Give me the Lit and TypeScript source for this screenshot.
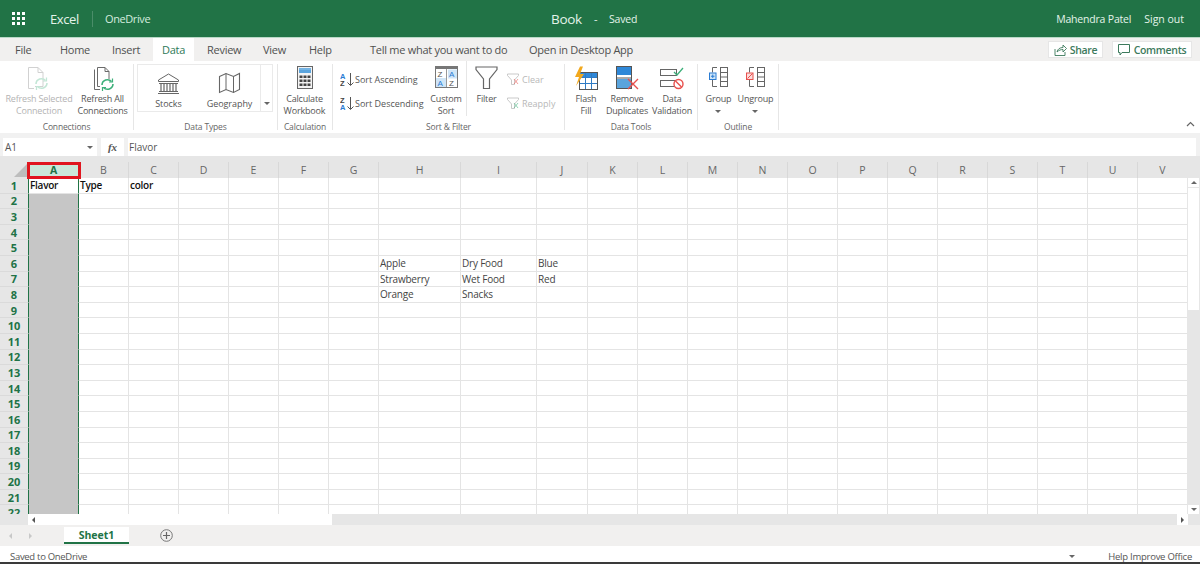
import { LitElement, html, css, svg } from "lit";
import { customElement } from "lit/decorators.js";

const COLS: [string, number][] = [
  ["A", 50], ["B", 50], ["C", 50], ["D", 50], ["E", 50], ["F", 50], ["G", 50], ["H", 82], ["I", 76], ["J", 51], ["K", 50],
  ["L", 50], ["M", 50], ["N", 50], ["O", 50], ["P", 50], ["Q", 50], ["R", 50], ["S", 50], ["T", 50], ["U", 50], ["V", 50],
];
const CELLS: Record<string, string> = {
  A1: "Flavor", B1: "Type", C1: "color",
  H6: "Apple", I6: "Dry Food", J6: "Blue",
  H7: "Strawberry", I7: "Wet Food", J7: "Red",
  H8: "Orange", I8: "Snacks",
};
/* label, slot width, left inset of the label inside its slot */
const TABS: [string, number, number][] = [
  ["File", 60, 15], ["Home", 52, 0], ["Insert", 41, 0], ["Data", 41, 9], ["Review", 69, 13],
  ["View", 46, 0], ["Help", 61, 0], ["Tell me what you want to do", 159, 0], ["Open in Desktop App", 140, 0],
];

const icon = (w: number, h: number, body: unknown) => html`<svg width=${w} height=${h} viewBox="0 0 ${w} ${h}" fill="none">${body}</svg>`;

const refresh = (o: number) => svg`<g opacity=${o}><path d="M1.500 1.500H11L16 6.500V20.500H8M1.500 1.500V22.500H7" stroke="#6a6a6a"/><path d="M11 1.500V6.500H16" stroke="#6a6a6a"/><path d="M9 18a5.500 5.500 0 0 1 9.500-3.500M20 17a5.500 5.500 0 0 1-9.500 3.500" stroke="#3db07a" stroke-width="1.600"/><path d="M19.500 11.500V15H16M9.500 24V20.500H13" stroke="#3db07a" stroke-width="1.200"/></g>`;
const refreshAll = svg`<path d="M3.500 3.500V23.500H9" stroke="#6a6a6a"/><path d="M6.500 1.500H14L18 5.500V13M6.500 1.500V20.500H9" stroke="#6a6a6a"/><path d="M14 1.500V5.500H18" stroke="#6a6a6a"/><path d="M11 19a5.500 5.500 0 0 1 9.500-3.500M22 18a5.500 5.500 0 0 1-9.500 3.500" stroke="#3db07a" stroke-width="1.600"/><path d="M21.500 12.500V16H18M11.500 25V21.500H15" stroke="#3db07a" stroke-width="1.200"/>`;
const bank = svg`<path d="M1.500 8 11.500 2l10 6v1.500h-20z" stroke="#666"/><path d="M4 12v7M7 12v7M10 12v7M13 12v7M16 12v7M19 12v7" stroke="#666" stroke-width="1.200"/><path d="M2 11.500h19M2 19.500h19M1 21.500h21" stroke="#666"/>`;
const mapI = svg`<path d="M1.500 4.500 8 1.500l7.500 3 6-3v16l-6 3-7.500-3-6.500 3z" stroke="#666" stroke-width="1.100"/><path d="M8 1.500v16M15.500 4.500v16" stroke="#666"/>`;
const calc = svg`<rect x=".5" y=".5" width="15" height="22" fill="#f4f4f4" stroke="#666"/><rect x="2" y="2" width="12" height="5" fill="#5aa4dd"/><path d="M2 3h12" stroke="#8fc3ea"/>${[9.5, 13.5, 17.5].map((y) => [2.5, 6.5, 10.5].map((x) => svg`<rect x=${x} y=${y} width="3" height="2.500" fill="#444"/>`))}`;
const az = (top: string, bot: string) => svg`<text x="0" y="7" font-size="7.500" font-weight="700" font-family="Liberation Sans" fill=${top}>${top === "#2b7cd3" ? "A" : "Z"}</text><text x="0" y="14" font-size="7.500" font-weight="700" font-family="Liberation Sans" fill=${bot}>${bot === "#2b7cd3" ? "A" : "Z"}</text><path d="M10.500 1v12M7.500 10.500l3 3 3-3" stroke="#555"/>`;
const customSort = svg`<rect x="0.500" y="0.500" width="22" height="21" fill="#fff" stroke="#777"/><path d="M0 1.500h23" stroke="#777" stroke-width="3"/><path d="M11.500 3v18" stroke="#999"/><rect x="13" y="3.500" width="9" height="9" fill="#cfe5f7"/><rect x="1" y="12" width="10" height="9" fill="#cfe5f7"/><text x="2.500" y="10.500" font-size="8" font-family="Liberation Sans" fill="#555">Z</text><text x="2.500" y="19.500" font-size="8" font-family="Liberation Sans" fill="#2b7cd3">A</text><text x="14" y="10.500" font-size="8" font-family="Liberation Sans" fill="#2b7cd3">A</text><text x="14" y="19.500" font-size="8" font-family="Liberation Sans" fill="#555">Z</text>`;
const funnel = svg`<path d="M1 1h21v2.500L14.500 13v9.500h-6V13L1 3.500z" stroke="#666" stroke-width="1.200"/>`;
const smallFunnel = (c: string) => svg`<path d="M.5 1h11v1.500L7.500 7v4.500h-3V7L.5 2.500z" stroke="#bbb" stroke-opacity=".8"/><path d="M7 6l4 5M11 6l-4 5" stroke=${c} stroke-opacity=".55"/>`;
const flash = svg`<rect x="5.500" y="6.500" width="18" height="17" fill="#fff" stroke="#555"/><rect x="6" y="7" width="17" height="4.500" fill="#2f88d8"/><path d="M6 11.500h17M6 17.500h17M11.500 7v16M17.500 7v16" stroke="#2f7bc4"/><path d="M6 .5 1 11h4l-3 9 8-12H6l3-7.500z" fill="#f2a81d"/>`;
const removeDup = svg`<rect x=".5" y=".5" width="15" height="22" fill="#fff" stroke="#555"/><rect x="1" y="1" width="14" height="8" fill="#2f88d8"/><rect x="1" y="13" width="14" height="9" fill="#5aa4dd"/><path d="M1 12h14" stroke="#555"/><path d="M12 13l10 10M22 13 12 23" stroke="#e8504d" stroke-width="1.400"/>`;
const validate = svg`<rect x=".5" y="3.500" width="16" height="6" stroke="#666"/><rect x=".5" y="14.500" width="16" height="6" stroke="#666"/><path d="M14 6l3 3 6-7" stroke="#3db07a" stroke-width="1.300"/><circle cx="18.500" cy="18" r="4.500" fill="#fff" stroke="#e8504d" stroke-width="1.400"/><path d="M15.500 15l6 6" stroke="#e8504d" stroke-width="1.400"/>`;
const stack = svg`<rect x="12.500" y="1.500" width="7" height="19" stroke="#666"/><path d="M12.500 6.500h7M12.500 11h7M12.500 15.500h7" stroke="#666"/>`;
const group = svg`${stack}<path d="M9 1.500H4.500v5M4.500 14v6.500H9" stroke="#666"/><rect x="1.500" y="7" width="6.500" height="6.500" fill="#cfe5f7" stroke="#2b7cd3"/><path d="M3 10.250h3.500M4.750 8.500V12" stroke="#2b7cd3"/>`;
const ungroup = svg`${stack}<path d="M9 1.500H4.500v5M4.500 14v6.500H9" stroke="#666"/><rect x="1.500" y="7" width="6.500" height="6.500" fill="#fbdcdc" stroke="#e8504d"/><path d="M2.500 12.500l5-5" stroke="#e8504d"/>`;

@customElement("app-root")
export class AppRoot extends LitElement {
  static styles = css`
    :host { display: block; width: 1200px; height: 564px; overflow: hidden; background: #f1f0ef; font-family: "Open Sans", "Noto Sans", sans-serif; color: #444; position: relative; }
    * { box-sizing: border-box; }
    svg { display: block; }
    .head { height: 38px; background: #217346; border-bottom: 1px solid #b9d9c7; display: flex; align-items: center; color: #e4f3ea; }
    .waffle { margin-left: 12px; width: 13px; height: 13px; display: grid; grid-template: repeat(3, 3px) / repeat(3, 3px); gap: 2px; }
    .waffle i { background: #fff; }
    .excel { margin-left: 25px; font-size: 13px; letter-spacing: -0.4px; width: 42px; }
    .vsep { width: 1px; height: 16px; background: #4a8d69; }
    .onedrive { margin-left: 12px; font-size: 11px; letter-spacing: -0.4px; width: 446px; color: #d4ecdf; }
    .book { font-size: 13.500px; letter-spacing: -0.3px; width: 43px; }
    .dash { font-size: 11px; width: 15px; }
    .saved { font-size: 10.500px; letter-spacing: -0.2px; }
    .user { margin-left: auto; font-size: 10.500px; letter-spacing: -0.2px; white-space: nowrap; }
    .signout { margin: 0 16px 0 13px; font-size: 10.500px; white-space: nowrap; }
    .tabs { height: 23px; display: flex; align-items: stretch; font-size: 11px; letter-spacing: -0.27px; position: relative; }
    .tab { display: flex; align-items: center; white-space: nowrap; color: #505050; flex: none; }
    .tab.active { background: #fff; color: #2f7a58; }
    .tabs .spacer { margin-left: auto; display: flex; gap: 9px; padding: 3px 8px 3px 0; }
    .pill { background: #fff; border: 1px solid #e6e6e6; display: flex; align-items: center; justify-content: center; gap: 3px; font-size: 10.500px; letter-spacing: -0.3px; color: #3c7a5c; height: 17px; font-weight: 600; }
    .pill.share { width: 55px; }
    .pill.comments { width: 80px; }
    .ribbon { height: 72px; background: #fff; display: flex; position: relative; }
    .group { display: flex; flex-direction: column; border-right: 1px solid #e6e6e6; margin: 3px 0 3px; flex: none; }
    .body { height: 55px; margin-top: -3px; display: flex; flex: none; }
    .body.conn { padding-left: 4px; }
    .body.outline { padding-left: 2px; }
    .glabel { text-align: center; font-size: 8.500px; letter-spacing: -0.15px; color: #666; margin-top: 5px; line-height: 12px; white-space: nowrap; }
    .btn { display: flex; flex-direction: column; align-items: center; font-size: 9px; letter-spacing: -0.18px; line-height: 11.500px; text-align: center; color: #555; flex: none; white-space: nowrap; }
    .btn .ic { height: 32px; display: flex; align-items: flex-start; justify-content: center; padding-top: 5px; flex: none; }
    .btn.off { color: #b4b4b4; }
    .dtbox { margin: 3px 3px 0 3px; width: 136px; height: 48px; border: 1px solid #eaeaea; display: flex; position: relative; }
    .dtbtn { display: flex; flex-direction: column; align-items: center; font-size: 9px; letter-spacing: -0.05px; color: #555; padding-top: 7px; gap: 3px; flex: none; width: 61px; }
    .dtmore { margin-left: auto; width: 12px; border-left: 1px solid #eaeaea; display: flex; align-items: flex-end; justify-content: center; padding-bottom: 6px; }
    .caret { width: 0; height: 0; border: 3px solid transparent; border-top: 3px solid #666; border-bottom: 0; }
    .incaret { display: inline-block; vertical-align: middle; }
    .sortcol { width: 93px; padding-left: 7px; display: flex; flex-direction: column; gap: 10px; padding-top: 11px; flex: none; }
    .sortrow { display: flex; align-items: center; gap: 0; font-size: 9px; color: #555; height: 14px; white-space: nowrap; }
    .clearcol { padding-left: 1px; display: flex; flex-direction: column; gap: 10px; padding-top: 11px; }
    .clearrow { display: flex; align-items: center; gap: 3px; font-size: 9px; color: #b8b8b8; height: 14px; }
    .innersep { width: 1px; height: 55px; background: #e6e6e6; flex: none; }
    .chev { position: absolute; right: 5px; bottom: 6px; }
    .gap { height: 5px; background: #f1f1f1; }
    .fbar { height: 18px; display: flex; gap: 4px; padding-left: 3px; padding-right: 4px; background: #f1f1f1; }
    .namebox { width: 94px; background: #fff; font-size: 10px; color: #555; display: flex; align-items: center; padding-left: 2px; justify-content: space-between; padding-right: 4px; }
    .fx { width: 23px; background: #fff; font-family: "Liberation Serif", serif; font-style: italic; font-size: 11px; display: flex; align-items: center; justify-content: center; color: #555; font-weight: 700; }
    .fval { flex: 1; background: #fff; font-size: 10px; color: #555; display: flex; align-items: center; padding-left: 1px; }
    .sheet { height: 369px; background: #e6e6e6; padding-top: 6px; position: relative; display: flex; flex-direction: column; }
    .gridwrap { height: 352px; display: flex; flex: none; }
    .gridclip { width: 1187px; height: 352px; overflow: hidden; flex: none; }
    .grid { display: grid; grid-template-rows: 16px repeat(22, 15.600px); background: #fff; }
    .c { border-right: 1px solid #e4e4e4; border-bottom: 1px solid #e4e4e4; font-size: 10px; letter-spacing: -0.2px; padding-left: 1px; line-height: 14px; color: #444; white-space: nowrap; overflow: hidden; background: #fff; }
    .c.b { font-weight: 600; color: #111; letter-spacing: -0.25px; }
    .c.sel { background: #c6c6c6; border-bottom-color: #c6c6c6; }
    .c.selA { border-right: 1px solid #217346; }
    .c.sel1 { background: #fff; border-bottom-color: #e4e4e4; }
    .ch { background: #e6e6e6; border-right: 1px solid #d8d8d8; font-size: 10.500px; color: #666; display: flex; align-items: center; justify-content: center; }
    .ch.sel { background: #cbe8da; color: #217346; font-weight: 700; }
    .ch.corner { border: 0; display: flex; justify-content: flex-end; align-items: flex-end; padding: 0 2px 1px 0; }
    .rh { background: #e6e6e6; font-size: 11px; font-weight: 700; color: #217346; display: flex; align-items: center; justify-content: center; border-bottom: 1px solid #dadada; border-right: 1px solid #217346; line-height: 1; overflow: hidden; }
    .vbar { width: 13px; height: 352px; padding-top: 16px; display: flex; flex-direction: column; background: #e6e6e6; }
    .vbtn { height: 9px; margin: 0 1px; background: #fff; display: flex; align-items: center; justify-content: center; flex: none; }
    .vthumb { height: 122px; margin: 1px 1px 0; background: #fff; flex: none; }
    .vfill { flex: 1; }
    .up { border: 3px solid transparent; border-bottom: 3px solid #666; border-top: 0; width: 0; height: 0; }
    .down { border: 3px solid transparent; border-top: 3px solid #666; border-bottom: 0; width: 0; height: 0; }
    .hbar { flex: 1; display: flex; background: #e6e6e6; padding: 0 12px 0 28px; }
    .hbtn { width: 11px; background: #fff; display: flex; align-items: center; justify-content: center; flex: none; }
    .hthumb { width: 293px; background: #fff; flex: none; }
    .left { border: 3px solid transparent; border-right: 3px solid #555; border-left: 0; width: 0; height: 0; }
    .right { border: 3px solid transparent; border-left: 3px solid #555; border-right: 0; width: 0; height: 0; }
    .hfill { flex: 1; }
    .select-mark { position: absolute; left: 27px; top: 6px; width: 54px; height: 17px; border: 3px solid #e0161f; pointer-events: none; }
    .sheets { height: 21px; background: #f1f0ef; display: flex; align-items: flex-start; padding-top: 2px; }
    .nav { width: 20px; height: 17px; display: flex; align-items: center; justify-content: center; }
    .nav .left { border-right-color: #c8c8c8; }
    .nav .right { border-left-color: #c8c8c8; }
    .sheettab { margin-left: 24px; width: 65px; height: 17px; background: #fff; border-bottom: 2px solid #217346; font-size: 10.500px; font-weight: 700; color: #217346; display: flex; align-items: center; justify-content: center; }
    .add { margin: 2px 0 0 31px; }
    .status { height: 16px; background: #fff; display: flex; align-items: center; font-size: 9.500px; letter-spacing: -0.3px; color: #555; padding: 5px 0 0 10px; line-height: 11px; white-space: nowrap; }
    .status .r { margin-left: auto; display: flex; align-items: center; gap: 33px; padding-right: 8px; letter-spacing: -0.25px; }
    .base { height: 2px; background: #3a3a3a; }
  `;

  private btn(label: unknown, ic: unknown, w: number, off = false) {
    return html`<div class="btn ${off ? "off" : ""}" style="width:${w}px"><div class="ic">${ic}</div><div>${label}</div></div>`;
  }

  private cell(c: string, r: number) {
    const id = c + r;
    const txt = CELLS[id] ?? "";
    const cls = ["c"];
    if (r === 1) cls.push("b");
    if (c === "A") { cls.push("sel", "selA"); if (r === 1) cls.push("sel1"); }
    return html`<div class=${cls.join(" ")}>${txt}</div>`;
  }

  render() {
    const rows = Array.from({ length: 22 }, (_, i) => i + 1);
    const gridCols = `29px ${COLS.map((c) => c[1] + "px").join(" ")}`;
    const caret = html`<span class="caret incaret"></span>`;
    return html`
      <div class="head">
        <div class="waffle">${Array.from({ length: 9 }, () => html`<i></i>`)}</div>
        <div class="excel">Excel</div><div class="vsep"></div>
        <div class="onedrive">OneDrive</div>
        <div class="book">Book</div><div class="dash">-</div><div class="saved">Saved</div>
        <div class="user">Mahendra Patel</div><div class="signout">Sign out</div>
      </div>
      <div class="tabs">
        ${TABS.map(([t, w, p]) => html`<div class="tab ${t === "Data" ? "active" : ""}" style="width:${w}px;padding-left:${p}px">${t}</div>`)}
        <div class="spacer">
          <div class="pill share">${icon(13, 12, svg`<path d="M1 5v6.500h10V8M3 8c.5-3 3-4.500 6-4.500V1l3.500 3.500L9 8V5.500C7 5.500 5 6 3 8z" stroke="#3c7a5c" stroke-width=".9"/>`)}Share</div>
          <div class="pill comments">${icon(13, 12, svg`<path d="M.5.5h11v8H4L2 11V8.500H.5z" stroke="#3c7a5c"/>`)}Comments</div>
        </div>
      </div>
      <div class="ribbon">
        <div class="group" style="width:134px">
          <div class="body conn">
            ${this.btn(html`Refresh Selected<br />Connection`, icon(24, 26, refresh(0.3)), 70, true)}
            ${this.btn(html`Refresh All<br />Connections`, icon(24, 26, refreshAll), 57)}
          </div>
          <div class="glabel">Connections</div>
        </div>
        <div class="group" style="width:144px">
          <div class="body">
            <div class="dtbox">
              <div class="dtbtn">${icon(23, 22, bank)}<span>Stocks</span></div>
              <div class="dtbtn">${icon(23, 22, mapI)}<span>Geography</span></div>
              <div class="dtmore"><div class="caret"></div></div>
            </div>
          </div>
          <div class="glabel">Data Types</div>
        </div>
        <div class="group" style="width:55px">
          <div class="body">${this.btn(html`Calculate<br />Workbook`, icon(16, 23, calc), 53)}</div>
          <div class="glabel">Calculation</div>
        </div>
        <div class="group" style="width:232px">
          <div class="body">
            <div class="sortcol">
              <div class="sortrow">${icon(15, 15, az("#2b7cd3", "#444"))}Sort Ascending</div>
              <div class="sortrow">${icon(15, 15, az("#444", "#2b7cd3"))}Sort Descending</div>
            </div>
            ${this.btn(html`Custom<br />Sort`, icon(23, 22, customSort), 40)}
            <div class="innersep"></div>
            ${this.btn("Filter", icon(23, 23, funnel), 39)}
            <div class="clearcol">
              <div class="clearrow">${icon(12, 12, smallFunnel("#e8504d"))}Clear</div>
              <div class="clearrow">${icon(12, 12, smallFunnel("#3db07a"))}Reapply</div>
            </div>
          </div>
          <div class="glabel">Sort &amp; Filter</div>
        </div>
        <div class="group" style="width:133px">
          <div class="body">
            ${this.btn(html`Flash<br />Fill`, icon(24, 24, flash), 42)}
            ${this.btn(html`Remove<br />Duplicates`, icon(23, 24, removeDup), 40)}
            ${this.btn(html`Data<br />Validation`, icon(24, 25, validate), 50)}
          </div>
          <div class="glabel">Data Tools</div>
        </div>
        <div class="group" style="width:81px">
          <div class="body outline">
            ${this.btn(html`Group<br />${caret}`, icon(21, 22, group), 37)}
            ${this.btn(html`Ungroup<br />${caret}`, icon(21, 22, ungroup), 37)}
          </div>
          <div class="glabel">Outline</div>
        </div>
        <div class="chev">${icon(9, 6, svg`<path d="M1 5l3.500-3.500L8 5" stroke="#666" stroke-width="1.200"/>`)}</div>
      </div>
      <div class="gap"></div>
      <div class="fbar">
        <div class="namebox">A1 <div class="caret"></div></div>
        <div class="fx">fx</div>
        <div class="fval">Flavor</div>
      </div>
      <div class="sheet">
        <div class="gridwrap">
          <div class="gridclip">
            <div class="grid" style="grid-template-columns:${gridCols}">
              <div class="ch corner">${icon(13, 13, svg`<path d="M13 0v13H0z" fill="#bdbdbd"/>`)}</div>
              ${COLS.map(([c]) => html`<div class="ch ${c === "A" ? "sel" : ""}">${c}</div>`)}
              ${rows.map((r) => html`<div class="rh">${r}</div>${COLS.map(([c]) => this.cell(c, r))}`)}
            </div>
          </div>
          <div class="vbar">
            <div class="vbtn"><div class="up"></div></div>
            <div class="vthumb"></div>
            <div class="vfill"></div>
            <div class="vbtn"><div class="down"></div></div>
          </div>
        </div>
        <div class="hbar">
          <div class="hbtn"><div class="left"></div></div>
          <div class="hthumb"></div>
          <div class="hfill"></div>
          <div class="hbtn"><div class="right"></div></div>
        </div>
        <div class="select-mark"></div>
      </div>
      <div class="sheets">
        <div class="nav"><div class="left"></div></div>
        <div class="nav"><div class="right"></div></div>
        <div class="sheettab">Sheet1</div>
        <div class="add">${icon(13, 13, svg`<circle cx="6.500" cy="6.500" r="5.800" stroke="#777"/><path d="M6.500 3v7M3 6.500h7" stroke="#666" stroke-width="1.200"/>`)}</div>
      </div>
      <div class="status">Saved to OneDrive
        <div class="r"><div class="caret"></div><span>Help Improve Office</span></div>
      </div>
      <div class="base"></div>
    `;
  }
}
